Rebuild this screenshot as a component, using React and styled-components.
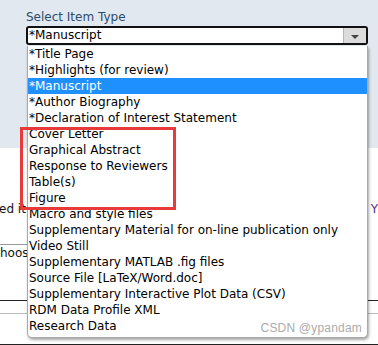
import React from 'react';
import styled, { createGlobalStyle } from 'styled-components';

const GlobalStyle = createGlobalStyle`
    html, body {
        margin: 0;
        padding: 0;
        background: #ffffff;
        font-family: "DejaVu Sans", Verdana, sans-serif;
    }
    #root {
        width: 378px;
        height: 345px;
        overflow: hidden;
        position: relative;
    }
`;

const items = [
    '*Title Page',
    '*Highlights (for review)',
    '*Manuscript',
    '*Author Biography',
    '*Declaration of Interest Statement',
    'Cover Letter',
    'Graphical Abstract',
    'Response to Reviewers',
    'Table(s)',
    'Figure',
    'Macro and style files',
    'Supplementary Material for on-line publication only',
    'Video Still',
    'Supplementary MATLAB .fig files',
    'Source File [LaTeX/Word.doc]',
    'Supplementary Interactive Plot Data (CSV)',
    'RDM Data Profile XML',
    'Research Data',
];

const Page = styled.div`
    position: relative;
    width: 378px;
    height: 345px;
    overflow: hidden;
`;

const TopPanel = styled.div`
    background: #e2e8ef;
    height: 148px;
    box-sizing: border-box;
    padding: 10px 10px 0 26px;
`;

const Label = styled.div`
    font-size: 12px;
    line-height: 15px;
    color: #2b4c6c;
    margin-bottom: 1px;
`;

const SelectBox = styled.div`
    display: flex;
    align-items: stretch;
    height: 19px;
    box-sizing: border-box;
    border: 2px solid #111;
    border-radius: 3px;
    background: #fff;
`;

const SelectValue = styled.div`
    flex: 1;
    font-size: 12px;
    line-height: 15px;
    color: #000;
    padding-left: 1px;
`;

const ArrowButton = styled.div`
    width: 22px;
    background: #dcdcdc;
    border-left: 1px solid #b5b5b5;
    display: flex;
    align-items: center;
    justify-content: center;
`;

const Arrow = styled.div`
    width: 0;
    height: 0;
    border-left: 4px solid transparent;
    border-right: 4px solid transparent;
    border-top: 4px solid #444;
    margin-top: 2px;
`;

const Lower = styled.div`
    display: flex;
    flex-direction: column;
`;

const TextRow = styled.div`
    display: flex;
    justify-content: space-between;
    font-size: 12px;
    line-height: 14px;
    margin-top: 54px;
`;

const ClipText = styled.span`
    margin-left: -1px;
    color: #111;
`;

const PurpleText = styled.span`
    color: #5a2a8a;
    margin-right: 0;
`;

const InputRow = styled.div`
    margin-top: 28px;
    width: 40px;
    height: 18px;
    border-top: 1px solid #999;
    font-size: 12px;
    line-height: 17px;
    color: #111;
`;

const Rule = styled.div`
    height: 0;
    border-top: 1px solid ${(p) => p.color};
    margin-top: ${(p) => p.gap}px;
`;

const Dropdown = styled.ul`
    position: absolute;
    top: 46px;
    left: 27px;
    width: 341px;
    margin: 0;
    padding: 0 0 3px;
    list-style: none;
    background: #fff;
    border: 1px solid #a9a9a9;
    border-top: none;
    border-radius: 0 0 5px 5px;
    box-shadow: 1px 2px 3px rgba(0, 0, 0, 0.35);
    box-sizing: border-box;
`;

const Option = styled.li`
    height: 16px;
    font-size: 12px;
    line-height: 16px;
    padding-left: 1px;
    white-space: nowrap;
    color: ${(p) => (p.selected ? '#fff' : '#000')};
    background: ${(p) => (p.selected ? '#1e90ff' : 'transparent')};
`;

const Highlight = styled.div`
    position: absolute;
    left: 20px;
    top: 127px;
    width: 156px;
    height: 83px;
    box-sizing: border-box;
    border: 3px solid #e8393b;
    pointer-events: none;
`;

const Watermark = styled.div`
    position: absolute;
    right: 16px;
    bottom: 10px;
    font-family: "Liberation Sans", Arial, sans-serif;
    font-size: 12px;
    letter-spacing: 0.2px;
    color: #ababab;
`;

export default function App() {
    return (
        <Page>
            <GlobalStyle />
            <TopPanel>
                <Label>Select Item Type</Label>
                <SelectBox>
                    <SelectValue>*Manuscript</SelectValue>
                    <ArrowButton>
                        <Arrow />
                    </ArrowButton>
                </SelectBox>
            </TopPanel>
            <Lower>
                <TextRow>
                    <ClipText>ed it</ClipText>
                    <PurpleText>Y</PurpleText>
                </TextRow>
                <InputRow>hoos</InputRow>
                <Rule color="#222" gap={37} />
                <Rule color="#bbb" gap={12} />
                <Rule color="#222" gap={30} />
            </Lower>
            <Dropdown>
                {items.map((item) => (
                    <Option key={item} selected={item === '*Manuscript'}>
                        {item}
                    </Option>
                ))}
            </Dropdown>
            <Highlight />
            <Watermark>CSDN @ypandam</Watermark>
        </Page>
    );
}
